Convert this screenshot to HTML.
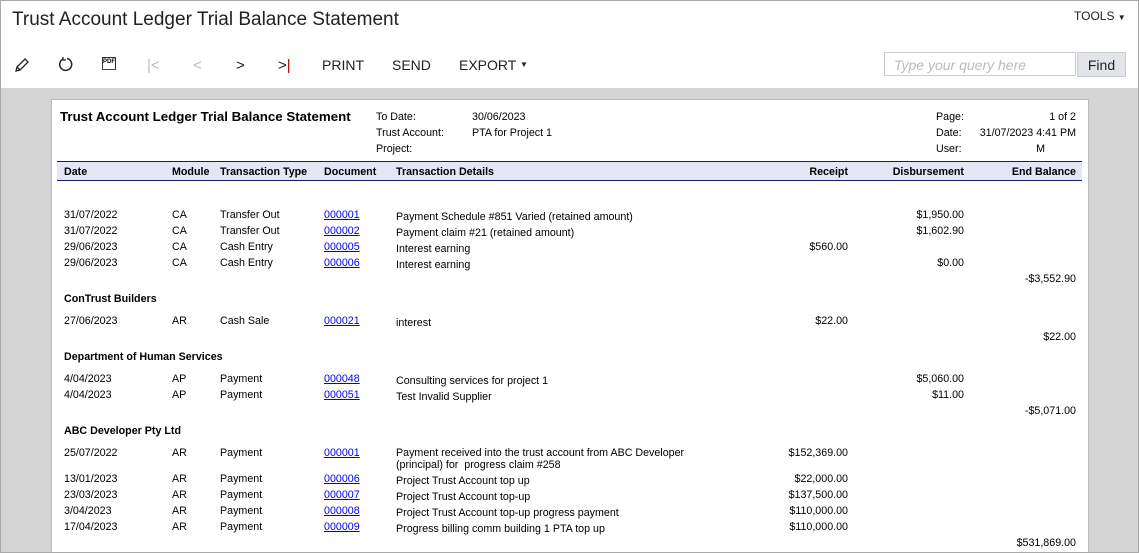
<!DOCTYPE html>
<html style="overflow:hidden"><head><style>
html,body{margin:0;width:1139px;height:553px;overflow:hidden}
body{font-family:"Liberation Sans",Arial,sans-serif;background:#fff;position:relative}
.frame{position:absolute;left:0;top:0;width:1137px;height:551px;border:1px solid #a8a8a8;z-index:5;pointer-events:none}
.gray{position:absolute;left:1px;top:88px;width:1137px;height:464px;background:#d4d4d4}
.page{position:absolute;left:51px;top:99px;width:1036px;height:453px;background:#fff;border:1px solid #bbb;border-bottom:none}
.a{position:absolute;white-space:nowrap}
.s{font-size:10.7px;color:#000}
.r{text-align:right}
.lnk{color:#0000ee;text-decoration:underline}
.tb{font-size:15px;color:#222;top:57px}
#rows{position:absolute;left:0;top:1px}
</style></head><body>
<div class="frame"></div>
<div class="a" style="left:12px;top:9px;font-size:19px;color:#222">Trust Account Ledger Trial Balance Statement</div>
<div class="a" style="left:1074px;top:9px;font-size:12px;color:#222">TOOLS <span style="font-size:8px">▼</span></div>
<svg class="a" style="left:14px;top:57px" width="16" height="16" viewBox="0 0 16 16"><path d="M2 14 L3 10 L11 2 L14 5 L6 13 Z M3 10 L6 13" fill="none" stroke="#222" stroke-width="1.3"/></svg>
<svg class="a" style="left:58px;top:56px" width="16" height="16" viewBox="0 0 16 16"><path d="M5 3 A6 6 0 1 0 9 2.5" fill="none" stroke="#222" stroke-width="1.5"/><path d="M5 1 L5 4 L8 4" fill="none" stroke="#222" stroke-width="1.3"/></svg>
<div class="a" style="left:102px;top:57px;width:14px;height:13px;border:1.5px solid #333;border-bottom-color:#8a1a4a;font-size:6px;font-weight:bold;line-height:8px;text-align:center;box-sizing:border-box">PDF</div>
<div class="a tb" style="left:147px;color:#bbb">|&lt;</div>
<div class="a tb" style="left:193px;color:#bbb">&lt;</div>
<div class="a tb" style="left:236px">&gt;</div>
<div class="a tb" style="left:278px">&gt;<span style="color:#a00">|</span></div>
<div class="a tb" style="left:322px;font-size:14px;top:57px">PRINT</div>
<div class="a tb" style="left:392px;font-size:14px;top:57px">SEND</div>
<div class="a tb" style="left:459px;font-size:14px;top:57px">EXPORT <span style="font-size:8px;vertical-align:3px">▼</span></div>
<div class="a" style="left:884px;top:52px;width:192px;height:24px;border:1px solid #ccc;box-sizing:border-box;font-size:14px;font-style:italic;color:#bbb;padding:4px 0 0 9px">Type your query here</div>
<div class="a" style="left:1077px;top:52px;width:49px;height:25px;background:#e1e4e9;border:1px solid #ccc;box-sizing:border-box;font-size:14px;color:#222;text-align:center;padding-top:4px">Find</div>
<div class="gray"></div>
<div class="page"></div>
<div class="a" style="left:60px;top:109px;font-size:13.3px;font-weight:bold">Trust Account Ledger Trial Balance Statement</div>
<div class="a s" style="left:376px;top:109px;line-height:16px">To Date:<br>Trust Account:<br>Project:</div>
<div class="a s" style="left:472px;top:109px;line-height:16px">30/06/2023<br>PTA for Project 1</div>
<div class="a s" style="left:936px;top:109px;line-height:16px">Page:<br>Date:<br>User:</div>
<div class="a s r" style="left:960px;width:116px;top:109px;line-height:16px">1 of 2<br>31/07/2023 4:41 PM<br><span style="margin-right:31px">M</span></div>
<div class="a" style="left:57px;top:161px;width:1025px;height:18px;background:#e4e6f5;border-top:1px solid #1a1a6a;border-bottom:1px solid #1a1a6a"></div>
<div class="a s" style="left:64px;top:166px;font-weight:bold">Date</div>
<div class="a s" style="left:172px;top:166px;font-weight:bold">Module</div>
<div class="a s" style="left:220px;top:166px;font-weight:bold">Transaction Type</div>
<div class="a s" style="left:324px;top:166px;font-weight:bold">Document</div>
<div class="a s" style="left:396px;top:166px;font-weight:bold">Transaction Details</div>
<div class="a s r" style="left:748px;width:100px;top:166px;font-weight:bold">Receipt</div>
<div class="a s r" style="left:864px;width:100px;top:166px;font-weight:bold">Disbursement</div>
<div class="a s r" style="left:976px;width:100px;top:166px;font-weight:bold">End Balance</div>

<div id="rows">
<div class="a s" style="left:64px;top:208px">31/07/2022</div><div class="a s" style="left:172px;top:208px">CA</div><div class="a s" style="left:220px;top:208px">Transfer Out</div><div class="a s lnk" style="left:324px;top:208px">000001</div><div class="a s" style="left:396px;top:210px">Payment Schedule #851 Varied (retained amount)</div><div class="a s r" style="left:864px;width:100px;top:208px">$1,950.00</div>
<div class="a s" style="left:64px;top:224px">31/07/2022</div><div class="a s" style="left:172px;top:224px">CA</div><div class="a s" style="left:220px;top:224px">Transfer Out</div><div class="a s lnk" style="left:324px;top:224px">000002</div><div class="a s" style="left:396px;top:226px">Payment claim #21 (retained amount)</div><div class="a s r" style="left:864px;width:100px;top:224px">$1,602.90</div>
<div class="a s" style="left:64px;top:240px">29/06/2023</div><div class="a s" style="left:172px;top:240px">CA</div><div class="a s" style="left:220px;top:240px">Cash Entry</div><div class="a s lnk" style="left:324px;top:240px">000005</div><div class="a s" style="left:396px;top:242px">Interest earning</div><div class="a s r" style="left:748px;width:100px;top:240px">$560.00</div>
<div class="a s" style="left:64px;top:256px">29/06/2023</div><div class="a s" style="left:172px;top:256px">CA</div><div class="a s" style="left:220px;top:256px">Cash Entry</div><div class="a s lnk" style="left:324px;top:256px">000006</div><div class="a s" style="left:396px;top:258px">Interest earning</div><div class="a s r" style="left:864px;width:100px;top:256px">$0.00</div>
<div class="a s r" style="left:976px;width:100px;top:272px">-$3,552.90</div>
<div class="a s" style="left:64px;top:292px;font-weight:bold">ConTrust Builders</div>
<div class="a s" style="left:64px;top:314px">27/06/2023</div><div class="a s" style="left:172px;top:314px">AR</div><div class="a s" style="left:220px;top:314px">Cash Sale</div><div class="a s lnk" style="left:324px;top:314px">000021</div><div class="a s" style="left:396px;top:316px">interest</div><div class="a s r" style="left:748px;width:100px;top:314px">$22.00</div>
<div class="a s r" style="left:976px;width:100px;top:330px">$22.00</div>
<div class="a s" style="left:64px;top:350px;font-weight:bold">Department of Human Services</div>
<div class="a s" style="left:64px;top:372px">4/04/2023</div><div class="a s" style="left:172px;top:372px">AP</div><div class="a s" style="left:220px;top:372px">Payment</div><div class="a s lnk" style="left:324px;top:372px">000048</div><div class="a s" style="left:396px;top:374px">Consulting services for project 1</div><div class="a s r" style="left:864px;width:100px;top:372px">$5,060.00</div>
<div class="a s" style="left:64px;top:388px">4/04/2023</div><div class="a s" style="left:172px;top:388px">AP</div><div class="a s" style="left:220px;top:388px">Payment</div><div class="a s lnk" style="left:324px;top:388px">000051</div><div class="a s" style="left:396px;top:390px">Test Invalid Supplier</div><div class="a s r" style="left:864px;width:100px;top:388px">$11.00</div>
<div class="a s r" style="left:976px;width:100px;top:404px">-$5,071.00</div>
<div class="a s" style="left:64px;top:424px;font-weight:bold">ABC Developer Pty Ltd</div>
<div class="a s" style="left:64px;top:446px">25/07/2022</div><div class="a s" style="left:172px;top:446px">AR</div><div class="a s" style="left:220px;top:446px">Payment</div><div class="a s lnk" style="left:324px;top:446px">000001</div><div class="a s" style="left:396px;top:446px;line-height:12px">Payment received into the trust account from ABC Developer<br>(principal) for&nbsp; progress claim #258</div><div class="a s r" style="left:748px;width:100px;top:446px">$152,369.00</div>
<div class="a s" style="left:64px;top:472px">13/01/2023</div><div class="a s" style="left:172px;top:472px">AR</div><div class="a s" style="left:220px;top:472px">Payment</div><div class="a s lnk" style="left:324px;top:472px">000006</div><div class="a s" style="left:396px;top:474px">Project Trust Account top up</div><div class="a s r" style="left:748px;width:100px;top:472px">$22,000.00</div>
<div class="a s" style="left:64px;top:488px">23/03/2023</div><div class="a s" style="left:172px;top:488px">AR</div><div class="a s" style="left:220px;top:488px">Payment</div><div class="a s lnk" style="left:324px;top:488px">000007</div><div class="a s" style="left:396px;top:490px">Project Trust Account top-up</div><div class="a s r" style="left:748px;width:100px;top:488px">$137,500.00</div>
<div class="a s" style="left:64px;top:504px">3/04/2023</div><div class="a s" style="left:172px;top:504px">AR</div><div class="a s" style="left:220px;top:504px">Payment</div><div class="a s lnk" style="left:324px;top:504px">000008</div><div class="a s" style="left:396px;top:506px">Project Trust Account top-up progress payment</div><div class="a s r" style="left:748px;width:100px;top:504px">$110,000.00</div>
<div class="a s" style="left:64px;top:520px">17/04/2023</div><div class="a s" style="left:172px;top:520px">AR</div><div class="a s" style="left:220px;top:520px">Payment</div><div class="a s lnk" style="left:324px;top:520px">000009</div><div class="a s" style="left:396px;top:522px">Progress billing comm building 1 PTA top up</div><div class="a s r" style="left:748px;width:100px;top:520px">$110,000.00</div>
<div class="a s r" style="left:976px;width:100px;top:536px">$531,869.00</div>
</div>
</body></html>
